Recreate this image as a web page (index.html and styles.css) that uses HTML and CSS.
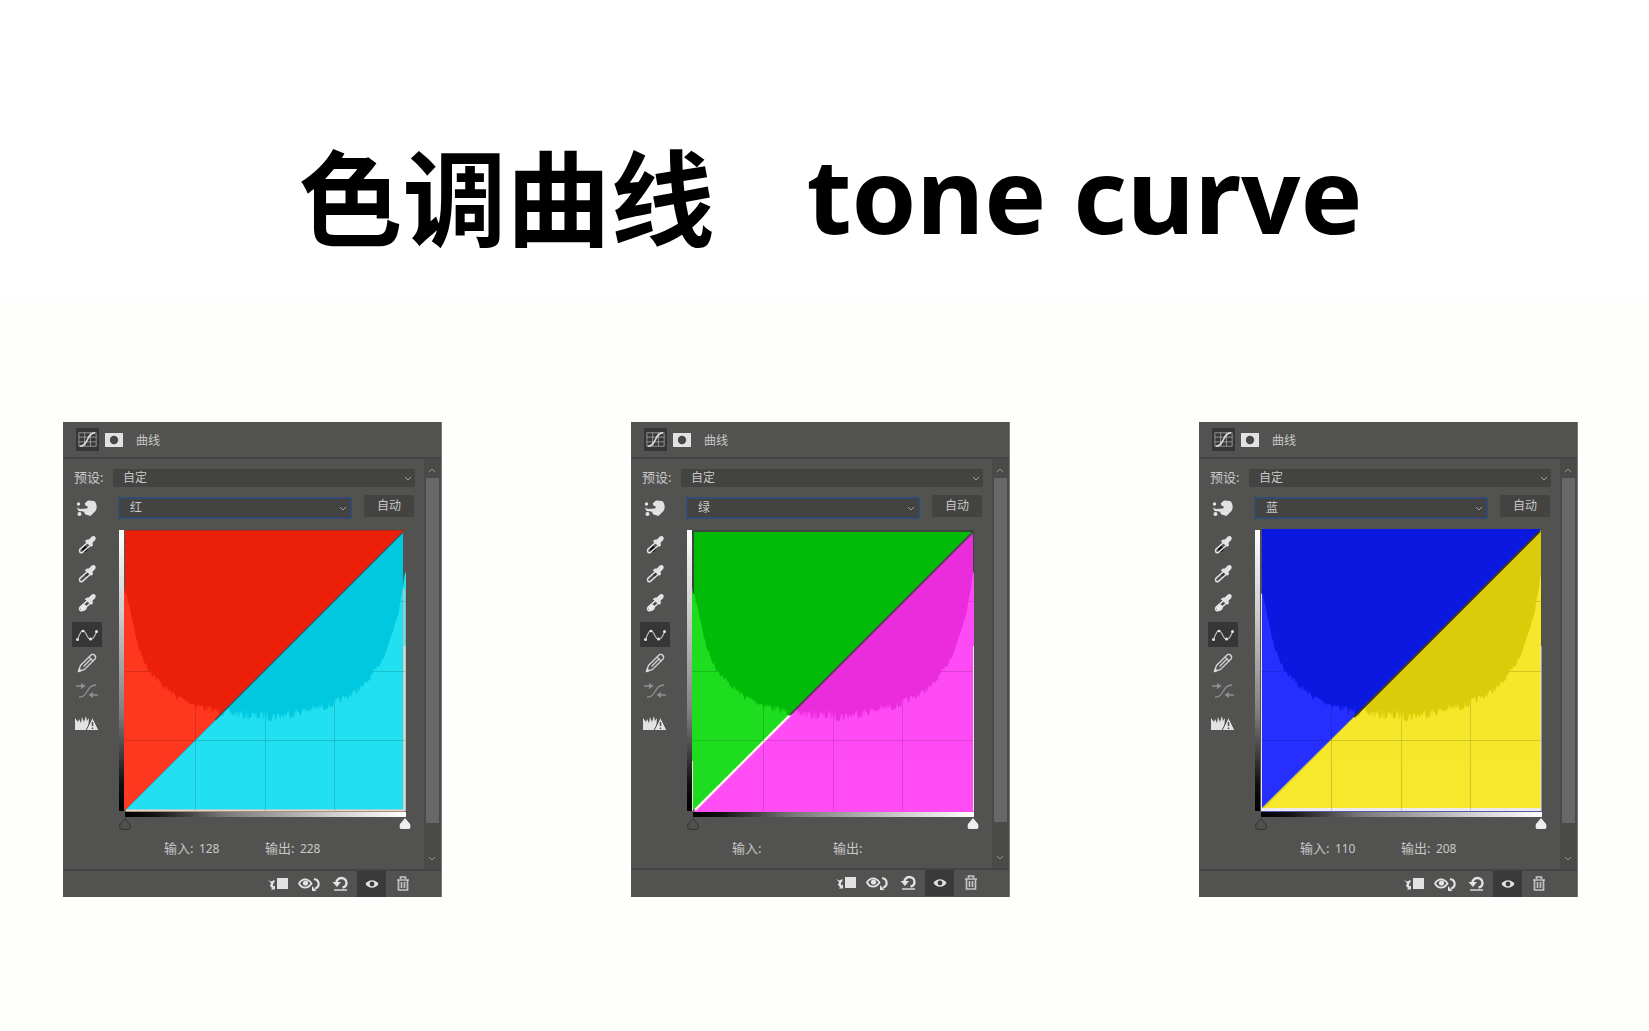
FILE: index.html
```html
<!DOCTYPE html>
<html lang="zh-CN">
<head>
<meta charset="utf-8">
<title>色调曲线 tone curve</title>
<link rel="stylesheet" href="styles.css">
</head>
<body>
	<svg class="sprite" aria-hidden="true">
		<defs>
			<clipPath id="histogram"><path id="histogram_path" d=""/></clipPath>
			<linearGradient id="ramp_v" x1="0" y1="0" x2="0" y2="1"><stop offset="0" stop-color="#fff"/><stop offset=".3" stop-color="#ccc"/><stop offset=".65" stop-color="#807f80"/><stop offset=".9" stop-color="#111"/><stop offset="1" stop-color="#000"/></linearGradient>
			<linearGradient id="ramp_h"><stop offset="0" stop-color="#000"/><stop offset=".1" stop-color="#111"/><stop offset=".35" stop-color="#777"/><stop offset=".75" stop-color="#d0d0d0"/><stop offset="1" stop-color="#fff"/></linearGradient>
		</defs>
		<symbol id="i_curves" viewBox="0 0 24 24"><path d="M3 5h18v14H3zM3 9.500h18M3 14.500h18M9 5v14M15 5v14" fill="none" stroke="#999"/><path d="M4 19c9 0 7-14 16-14" fill="none" stroke="#ddd" stroke-width="1.700"/></symbol>
		<symbol id="i_mask" viewBox="0 0 20 16"><path d="M1 1h18v14H1z" fill="#e2e2e2"/><circle cx="10" cy="8" r="4.200" fill="#484848"/></symbol>
		<symbol id="i_hand" viewBox="0 0 24 24"><circle cx="3.500" cy="8" r="1.700"/><circle cx="4.500" cy="18" r="2"/><path d="M2 11.500l3 1.500 7-.5 1-1.500-3-2V7l3-2.500 6 .5c3 2 3.500 7 1.500 10l-5 5-5-1.500-2-3-5-.5z"/></symbol>
		<symbol id="i_drop" viewBox="0 0 24 24"><path d="M12 6h2l3-3c2-2 6 0 4 3.500l-3 3 .5 3-2 1.500-7-6z"/><path d="M13 9l-8.500 7.500c-1.500 1.500-.5 4.500 2 4l9.500-8.500" fill="none" stroke="#e2e2e2" stroke-width="1.600"/></symbol>
		<symbol id="i_points" viewBox="0 0 24 24"><path d="M2.500 16.500C6 7 8 5 11 11s6 9 10.500-2" fill="none" stroke="#bbb" stroke-width="1.200"/><circle cx="2.500" cy="16.500" r="1.500"/><circle cx="8" cy="8" r="1.300"/><circle cx="15.500" cy="16" r="1.500"/><circle cx="21.500" cy="8.500" r="1.500"/></symbol>
		<symbol id="i_pencil" viewBox="0 0 24 24"><path d="M3.500 20.500l2-6L16 4c2-2 6 1 4 4L9.500 18.500zM14 6l4 4M8.500 15.500l7-7" fill="none" stroke="#d0d0d0" stroke-width="1.400"/><path d="M3 21l1-4 3 3z"/></symbol>
		<symbol id="i_smooth" viewBox="0 0 24 24"><path d="M1 7h6M17 16h6M4 18c9 1 7-12 17-12" fill="none" stroke="#909090" stroke-width="1.300"/><path d="M6 4l4.500 3L6 10zM18 13l-4.500 3 4.500 3z" fill="#909090"/></symbol>
		<symbol id="i_warn" viewBox="0 0 24 24"><path d="M0 6l3 4 1-3 2 4 1-6 2 5 2-6 1 5 2-3-1 12H0z"/><path d="M17.500 5.500l6.500 13H11z" stroke="#525250"/><path d="M17.500 10v4M17.500 15.500v1.500" stroke="#484848" stroke-width="1.400"/></symbol>
		<symbol id="i_clip" viewBox="0 0 24 24"><path d="M10 6h11v11H10z"/><path d="M1 8l3 1.500L7.500 8v2L6 12v2.500l2-1v4H4l1-1.500-2-2 1-3z"/></symbol>
		<symbol id="i_previous" viewBox="0 0 24 24"><path d="M1 11.500c3-5.500 9-5.500 12.500 0-3.500 5.500-9.500 5.500-12.500 0z" fill="none" stroke="#e2e2e2" stroke-width="1.800"/><circle cx="7.500" cy="11" r="2.600"/><path d="M16 7c6 1 6 8 1 9.500" fill="none" stroke="#e2e2e2" stroke-width="2.200"/><path d="M14 14v5h4.500z"/></symbol>
		<symbol id="i_reset" viewBox="0 0 24 24"><path d="M7.500 11.500C7 4 17.500 4.500 17.500 11c0 2-1 4-4 4.500" fill="none" stroke="#e2e2e2" stroke-width="2.400"/><path d="M3.500 10h8.500l-4 5z"/><path d="M5 18h13" stroke="#e2e2e2" stroke-width="1.400"/></symbol>
		<symbol id="i_eye" viewBox="0 0 24 24"><path d="M5.500 12c3-5 10-5 13 0-3 5-10 5-13 0z"/><circle cx="12" cy="12" r="2.400" fill="#3a3a3a"/></symbol>
		<symbol id="i_trash" viewBox="0 0 24 24"><path d="M6 8h12M9.500 7V5h5v2M7.500 8v10h9V8M10.500 10v6M13.500 10v6" fill="none" stroke="#c4c4c4" stroke-width="1.700"/></symbol>
		<symbol id="i_up" viewBox="0 0 12 12"><path d="M3 8l3-3 3 3" fill="none" stroke="#909090"/></symbol>
		<symbol id="i_down" viewBox="0 0 12 12"><path d="M3 4l3 3 3-3" fill="none" stroke="#909090"/></symbol>
		<symbol id="g_grid" viewBox="0 0 297 302"><path d="M77.500 2v280M147.500 2v280M216.500 2v280M7 72.500h280M7 142.500h280M7 211.500h280" fill="none" stroke="#000" stroke-opacity=".2"/></symbol>
		<symbol id="g_ramps" viewBox="0 0 297 302"><path d="M1 1h5v281H1z" fill="url(#ramp_v)"/><path d="M7 283h281v5H7z" fill="url(#ramp_h)"/><path d="M7 289.500l5 6c1 3 0 5-2 5H4c-2 0-3-2-2-5z" fill="#50504e" stroke="#333"/><path d="M287 289l5 6c1 3 0 5-1 5h-8c-1 0-2-2-1-5z" fill="#eee"/></symbol>
	</svg>

	<h1 class="title"><span class="title_zh">色调曲线</span> <span class="title_en">tone curve</span></h1>

	<div class="panels">
		<section class="panel">
			<div class="panel_head">
				<span class="head_icon"><svg><use href="#i_curves"/></svg></span>
				<svg class="mask"><use href="#i_mask"/></svg>
				<h2>曲线</h2>
			</div>
			<div class="panel_body">
				<div class="content">
					<div class="preset">
						<label for="preset_r">预设:</label>
						<select id="preset_r"><option>自定</option></select>
					</div>
					<div class="work">
						<div class="tools">
							<button class="tool hand" aria-label="目标调整"><svg><use href="#i_hand"/></svg></button>
							<button class="tool drop black" aria-label="黑场"><svg><use href="#i_drop"/></svg></button>
							<button class="tool drop gray" aria-label="灰场"><svg><use href="#i_drop"/></svg></button>
							<button class="tool drop white" aria-label="白场"><svg><use href="#i_drop"/></svg></button>
							<button class="tool points" aria-label="编辑点"><svg><use href="#i_points"/></svg></button>
							<button class="tool" aria-label="铅笔"><svg><use href="#i_pencil"/></svg></button>
							<button class="tool" aria-label="平滑"><svg><use href="#i_smooth"/></svg></button>
							<button class="tool warn" aria-label="直方图"><svg><use href="#i_warn"/></svg></button>
						</div>
						<div class="main">
							<div class="channel">
								<select aria-label="通道"><option>红</option></select>
								<button class="auto">自动</button>
							</div>
							<svg class="graph" viewBox="0 0 297 302">
								<path d="M6 1h281v281H6z" fill="#555"/>
								<path d="M7 2h279L7 281z" fill="#ec200a"/>
								<path d="M285 3v278H7z" fill="#00c8df"/>
								<g clip-path="url(#histogram)">
									<path d="M6 2h280L6 282z" fill="#ff3820"/>
									<path d="M288 2v280H7z" fill="#22e0f2"/>
									<path d="M286 60v222" stroke="#b4c0bc" stroke-width="2"/>
									<path d="M286.500 117v165M8 281.500h279" stroke="#f0d0c0" stroke-width="2"/>
								</g>
								<path d="M97 191L286 2" stroke="#42504f" stroke-width="1.500"/>
								<path d="M7 1.500h280" stroke="#b02a1a"/>
								<use href="#g_grid" class="only_low"/>
								<use href="#g_ramps"/>
							</svg>
							<div class="readout"><span>输入: <b>128</b></span><span>输出: <b>228</b></span></div>
						</div>
					</div>
				</div>
				<div class="scroll"><svg><use href="#i_up"/></svg><i></i><svg><use href="#i_down"/></svg></div>
			</div>
			<div class="panel_foot">
				<button aria-label="剪切到图层"><svg><use href="#i_clip"/></svg></button>
				<button aria-label="查看上一状态"><svg><use href="#i_previous"/></svg></button>
				<button aria-label="复位"><svg><use href="#i_reset"/></svg></button>
				<button class="on" aria-label="可见性"><svg><use href="#i_eye"/></svg></button>
				<button aria-label="删除"><svg><use href="#i_trash"/></svg></button>
			</div>
		</section>

		<section class="panel">
			<div class="panel_head">
				<span class="head_icon"><svg><use href="#i_curves"/></svg></span>
				<svg class="mask"><use href="#i_mask"/></svg>
				<h2>曲线</h2>
			</div>
			<div class="panel_body">
				<div class="content">
					<div class="preset">
						<label for="preset_g">预设:</label>
						<select id="preset_g"><option>自定</option></select>
					</div>
					<div class="work">
						<div class="tools">
							<button class="tool hand" aria-label="目标调整"><svg><use href="#i_hand"/></svg></button>
							<button class="tool drop black" aria-label="黑场"><svg><use href="#i_drop"/></svg></button>
							<button class="tool drop gray" aria-label="灰场"><svg><use href="#i_drop"/></svg></button>
							<button class="tool drop white" aria-label="白场"><svg><use href="#i_drop"/></svg></button>
							<button class="tool points" aria-label="编辑点"><svg><use href="#i_points"/></svg></button>
							<button class="tool" aria-label="铅笔"><svg><use href="#i_pencil"/></svg></button>
							<button class="tool" aria-label="平滑"><svg><use href="#i_smooth"/></svg></button>
							<button class="tool warn" aria-label="直方图"><svg><use href="#i_warn"/></svg></button>
						</div>
						<div class="main">
							<div class="channel">
								<select aria-label="通道"><option>绿</option></select>
								<button class="auto">自动</button>
							</div>
							<svg class="graph" viewBox="0 0 297 302">
								<path d="M6 1h282v282H6z" fill="#3a463a"/>
								<path d="M8 3h278L8 281z" fill="#02ba08"/>
								<path d="M287 4v278H8z" fill="#ea2cdd"/>
								<g clip-path="url(#histogram)">
									<path d="M6 2h280L6 282z" fill="#1edd20"/>
									<path d="M288 2v281H7z" fill="#ff4cf5"/>
									<path d="M9 281L106 184" stroke="#f4f0e4" stroke-width="2.500"/>
									<path d="M6.500 232v50M287.500 117v165" stroke="#f0e4dc"/>
								</g>
								<path d="M105 185L286 4" stroke="#5e405c" stroke-width="2"/>
								<use href="#g_grid" class="only_low"/>
								<use href="#g_ramps"/>
							</svg>
							<div class="readout"><span>输入:</span><span>输出:</span></div>
						</div>
					</div>
				</div>
				<div class="scroll"><svg><use href="#i_up"/></svg><i></i><svg><use href="#i_down"/></svg></div>
			</div>
			<div class="panel_foot">
				<button aria-label="剪切到图层"><svg><use href="#i_clip"/></svg></button>
				<button aria-label="查看上一状态"><svg><use href="#i_previous"/></svg></button>
				<button aria-label="复位"><svg><use href="#i_reset"/></svg></button>
				<button class="on" aria-label="可见性"><svg><use href="#i_eye"/></svg></button>
				<button aria-label="删除"><svg><use href="#i_trash"/></svg></button>
			</div>
		</section>

		<section class="panel">
			<div class="panel_head">
				<span class="head_icon"><svg><use href="#i_curves"/></svg></span>
				<svg class="mask"><use href="#i_mask"/></svg>
				<h2>曲线</h2>
			</div>
			<div class="panel_body">
				<div class="content">
					<div class="preset">
						<label for="preset_b">预设:</label>
						<select id="preset_b"><option>自定</option></select>
					</div>
					<div class="work">
						<div class="tools">
							<button class="tool hand" aria-label="目标调整"><svg><use href="#i_hand"/></svg></button>
							<button class="tool drop black" aria-label="黑场"><svg><use href="#i_drop"/></svg></button>
							<button class="tool drop gray" aria-label="灰场"><svg><use href="#i_drop"/></svg></button>
							<button class="tool drop white" aria-label="白场"><svg><use href="#i_drop"/></svg></button>
							<button class="tool points" aria-label="编辑点"><svg><use href="#i_points"/></svg></button>
							<button class="tool" aria-label="铅笔"><svg><use href="#i_pencil"/></svg></button>
							<button class="tool" aria-label="平滑"><svg><use href="#i_smooth"/></svg></button>
							<button class="tool warn" aria-label="直方图"><svg><use href="#i_warn"/></svg></button>
						</div>
						<div class="main">
							<div class="channel">
								<select aria-label="通道"><option>蓝</option></select>
								<button class="auto">自动</button>
							</div>
							<svg class="graph" viewBox="0 0 297 302">
								<path d="M7 1h280v281H7z" fill="#4a4c6c"/>
								<path d="M8 0h279L8 279z" fill="#0a18e0"/>
								<path d="M287 1v278H8z" fill="#dacc08"/>
								<g clip-path="url(#histogram)">
									<path d="M7 0h280L7 280z" fill="#2530ff"/>
									<path d="M287 0v282H7z" fill="#f6e82c"/>
									<path d="M7.500 60v222M287 117v165" stroke="#e6e4f4"/>
									<path d="M8 280.500h279" stroke="#eceaec" stroke-width="3"/>
								</g>
								<path d="M100 188L286 2" stroke="#3a3430" stroke-width="2"/>
								<path d="M8 279L100 188" stroke="#a8a08c"/>
								<path d="M7 282.500h280" stroke="#5558a8"/>
								<use href="#g_grid" class="only_low"/>
								<use href="#g_ramps"/>
							</svg>
							<div class="readout"><span>输入: <b>110</b></span><span>输出: <b>208</b></span></div>
						</div>
					</div>
				</div>
				<div class="scroll"><svg><use href="#i_up"/></svg><i></i><svg><use href="#i_down"/></svg></div>
			</div>
			<div class="panel_foot">
				<button aria-label="剪切到图层"><svg><use href="#i_clip"/></svg></button>
				<button aria-label="查看上一状态"><svg><use href="#i_previous"/></svg></button>
				<button aria-label="复位"><svg><use href="#i_reset"/></svg></button>
				<button class="on" aria-label="可见性"><svg><use href="#i_eye"/></svg></button>
				<button aria-label="删除"><svg><use href="#i_trash"/></svg></button>
			</div>
		</section>
	</div>
	<script src="histogram.js"></script>
</body>
</html>
```
FILE: styles.css
```css
* {box-sizing:border-box;}
body {margin:0; min-height:100vh; background:#fff; color:#c8c8c8; font:13px/18px "Noto Sans","Noto Sans CJK SC",sans-serif;}
button, select {font:inherit; color:inherit; border:none; border-radius:0; margin:0; padding:0;}
button {background:none;}
svg {display:block;}
.sprite {position:absolute; width:0; height:0;}

.title {display:flex; justify-content:center; align-items:flex-start; gap:92px; margin:0; padding:119px 0 0 12px; height:297px; color:#000; font-size:104px; line-height:150px; font-weight:bold;}
.title_zh {font-family:"Noto Sans CJK SC",sans-serif;}
.title_en {font-family:"Noto Sans",sans-serif;}

.panels {display:grid; grid-template-columns:repeat(3, 1fr); gap:189px; padding:125px 71px 134px 63px; background:#fefefc;}
.panel {background:#525250; border-right:1px solid #777;}

.panel_head {display:flex; align-items:center; height:37px; padding-left:13px; border-bottom:2px solid #444;}
.panel_head h2 {margin:2px 0 0 12px; font-size:12px; font-weight:normal;}
.head_icon {width:23px; height:23px; margin-right:5px; background:#363636;}
.head_icon svg {width:23px; height:23px;}
.mask {width:20px; height:16px;}

.panel_body {display:flex;}
.content {flex:1; padding:10px 9px 11px 0;}
.preset {display:flex; height:18px; padding-left:11px;}
.preset label {width:39px; font-size:13px; line-height:16px;}
select {appearance:none; flex:1; min-width:0; padding-left:10px; font-size:12px; background:#434341 url("data:image/svg+xml,%3Csvg xmlns='http://www.w3.org/2000/svg' width='8' height='6'%3E%3Cpath d='M1 1l3 3 3-3' fill='none' stroke='%23a0a0a0'/%3E%3C/svg%3E") right 3px bottom 5px no-repeat;}
.work {display:flex; margin-top:8px;}

.tools {display:flex; flex-direction:column; width:30px; margin:0 16px 0 9px;}
.tool {display:grid; place-items:center; height:28px;}
.tool svg {width:24px; height:24px; fill:#e2e2e2;}
.tool.hand {height:26px; margin-bottom:9px;}
.tool.drop {height:29px;}
.tool.drop svg {width:22px; height:22px;}
.tool.black svg {background:radial-gradient(#111 60%, transparent 70%) 6px 12px/6px 6px no-repeat;}
.tool.gray svg {background:radial-gradient(#333 60%, transparent 70%) 9px 9px/5px 5px no-repeat;}
.tool.white svg {background:radial-gradient(#eee 60%, transparent 70%) 4px 12px/7px 7px no-repeat;}
.tool.points {height:25px; margin:5px 0 2px; background:#363636;}
.tool.warn {margin-top:5px;}

.main {flex:1;}
.channel {display:flex; align-items:flex-start; gap:12px;}
.channel select {height:22px; margin-top:2px; border:2px solid #354a70;}
.auto {width:50px; height:22px; margin-right:1px; background:#434341; font-size:12px;}
.graph {width:100%; margin-top:10px;}
.only_low {opacity:.7; clip-path:url(#histogram);}
.readout {display:flex; margin-top:8px; padding-left:46px; font-size:13px;}
.readout span {width:101px;}
.readout b {margin-left:2px; font-size:12px; font-weight:normal;}

.scroll {display:flex; flex-direction:column; width:17px; padding:5px 2px 4px; background:#4a4a48;}
.scroll svg {width:12px; height:12px;}
.scroll i {flex:1; margin:2px 0 30px; background:#686868;}

.panel_foot {display:flex; justify-content:flex-end; height:28px; padding-right:23px; border-top:2px solid #444;}
.panel_foot button {display:grid; place-items:center; width:31px;}
.panel_foot svg {width:24px; height:24px; fill:#e2e2e2;}
.panel_foot .on {width:29px; margin:0 1px; background:#3a3a3a;}
```
FILE: histogram.js
```js
// outline of the histogram: [x, y] in graph units
var outline = [[6,60],[10,71],[15,93],[20,117],[29,138],[43,155],[59,168],[76,175],[93,181],[106,183],[133,187],[160,187],[186,182],[213,176],[229,168],[246,157],[259,140],[269,120],[276,98],[281,80],[286,50],[289,40]];

var seed = 7;
var noise = function() {
	seed = (seed * 16807) % 2147483647;
	return seed / 2147483647 - 0.5;
};

var d = 'M6 302';
for (var i = 0; i < outline.length - 1; i++) {
	var a = outline[i], b = outline[i + 1];
	for (var x = a[0]; x < b[0]; x++) {
		var y = a[1] + (b[1] - a[1]) * (x - a[0]) / (b[0] - a[0]);
		// the bars get rougher towards the middle
		var rough = 12 - Math.abs(x - 147) / 20;
		y = Math.round((y + noise() * rough) * 10) / 10;
		d += 'L' + x + ' ' + y;
	}
}
d += 'L289 40V302Z';
document.getElementById('histogram_path').setAttribute('d', d);
```
